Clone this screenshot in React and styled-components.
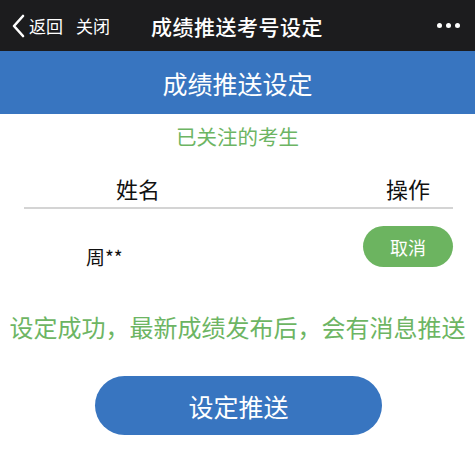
import styled, { createGlobalStyle } from 'styled-components'

const GlobalStyle = createGlobalStyle`
  body {
    margin: 0;
    background: #ffffff;
    font-family: 'Noto Sans CJK SC', 'Noto Sans', sans-serif;
  }
`

const Page = styled.div`
  width: 475px;
  min-height: 453px;
  background: #fff;
`

const TopBar = styled.div`
  height: 51px;
  background: #1c1c1e;
  display: flex;
  align-items: center;
  padding: 0 12px;
  color: #fff;
  box-sizing: border-box;
`

const BackLink = styled.div`
  display: flex;
  align-items: center;
  gap: 4px;
  font-size: 17px;
`

const CloseLink = styled.div`
  font-size: 17px;
  margin-left: 13px;
`

const TopTitle = styled.div`
  font-size: 21px;
  font-weight: 500;
  margin-left: 41px;
  letter-spacing: 0.5px;
`

const More = styled.div`
  margin-left: auto;
  margin-right: 3px;
  display: flex;
  gap: 4px;

  span {
    width: 5px;
    height: 5px;
    border-radius: 50%;
    background: #fff;
  }
`

const Banner = styled.div`
  height: 63px;
  background: #3875c0;
  color: #fff;
  font-size: 25px;
  display: flex;
  align-items: center;
  justify-content: center;
`

const Caption = styled.div`
  color: #6db563;
  font-size: 20.5px;
  text-align: center;
  margin-top: 8px;
  line-height: 28px;
`

const Table = styled.div`
  margin: 19px 22px 0 24px;
`

const Row = styled.div`
  display: grid;
  grid-template-columns: 228px 1fr 90px;
  align-items: center;
  height: ${p => p.$h}px;
  border-bottom: ${p => (p.$line ? '2px solid #d4d4d4' : 'none')};
`

const HeadCell = styled.div`
  font-size: 22px;
  color: #111;
  text-align: center;
  line-height: 24px;
`

const NameCell = styled.div`
  font-size: 19px;
  color: #111;
  padding-left: 62px;
  margin-top: 20px;
`

const CancelBtn = styled.button`
  width: 90px;
  height: 41px;
  border: none;
  border-radius: 21px;
  background: #6cb460;
  color: #fff;
  font-size: 18px;
  font-family: inherit;
  padding: 0;
`

const Notice = styled.div`
  color: #6db563;
  font-size: 24px;
  text-align: center;
  margin-top: 27px;
  white-space: nowrap;
  line-height: 32px;
`

const SubmitBtn = styled.button`
  display: block;
  margin: 33px 0 0 95px;
  width: 287px;
  height: 59px;
  border: none;
  border-radius: 30px;
  background: #3875c0;
  color: #fff;
  font-size: 25px;
  font-family: inherit;
`

export default function App() {
  return (
    <Page>
      <GlobalStyle />
      <TopBar>
        <BackLink>
          <svg width="13" height="24" viewBox="0 0 13 24">
            <path d="M11 2 L2 12 L11 22" fill="none" stroke="#fff" strokeWidth="2.6" strokeLinecap="round" strokeLinejoin="round" />
          </svg>
          返回
        </BackLink>
        <CloseLink>关闭</CloseLink>
        <TopTitle>成绩推送考号设定</TopTitle>
        <More><span /><span /><span /></More>
      </TopBar>
      <Banner>成绩推送设定</Banner>
      <Caption>已关注的考生</Caption>
      <Table>
        <Row $h={38} $line>
          <HeadCell>姓名</HeadCell>
          <div />
          <HeadCell>操作</HeadCell>
        </Row>
        <Row $h={75}>
          <NameCell>周**</NameCell>
          <div />
          <CancelBtn>取消</CancelBtn>
        </Row>
      </Table>
      <Notice>设定成功，最新成绩发布后，会有消息推送</Notice>
      <SubmitBtn>设定推送</SubmitBtn>
    </Page>
  )
}
